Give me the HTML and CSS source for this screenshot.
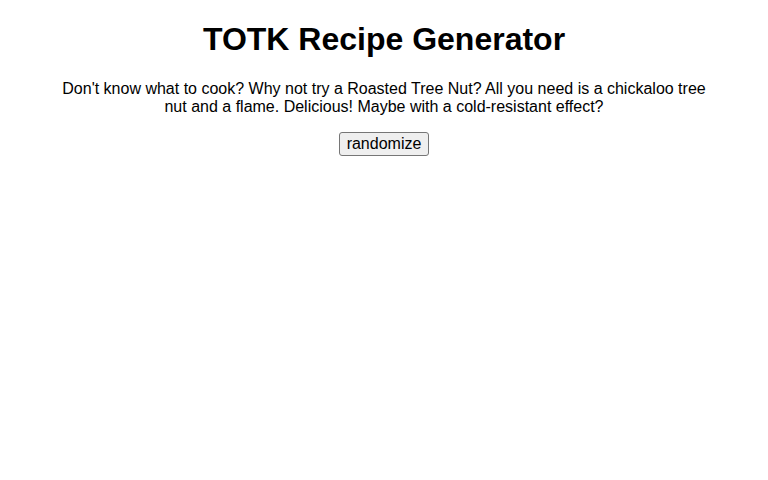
FILE: index.html
```html
<!DOCTYPE html>
<html lang="en">
<head>
<meta charset="utf-8">
<title>TOTK Recipe Generator</title>
<link rel="stylesheet" href="styles.css">
</head>
<body>
<main class="app">
  <h1 class="title">TOTK Recipe Generator</h1>
  <p class="recipe">Don't know what to cook? Why not try a Roasted Tree Nut? All you need is a chickaloo tree nut and a flame. Delicious! Maybe with a cold-resistant effect?</p>
  <button class="randomize" type="button">randomize</button>
</main>
</body>
</html>
```

FILE: styles.css
```css
body {
  margin: 0 8px;
  font-family: "Liberation Sans", Arial, sans-serif;
  color: #000;
  background: #fff;
}

.app {
  text-align: center;
}

.title {
  font-size: 32px;
  font-weight: bold;
  margin: 21.44px 0;
}

.recipe {
  font-size: 16px;
  line-height: 18px;
  margin: 16px 54px;
}

.randomize {
  font-family: "Liberation Sans", Arial, sans-serif;
  font-size: 16px;
  line-height: 18px;
  padding: 2px 7px;
  background: #efefef;
  border: 1px solid #767676;
  border-radius: 3px;
  color: #000;
}
```
